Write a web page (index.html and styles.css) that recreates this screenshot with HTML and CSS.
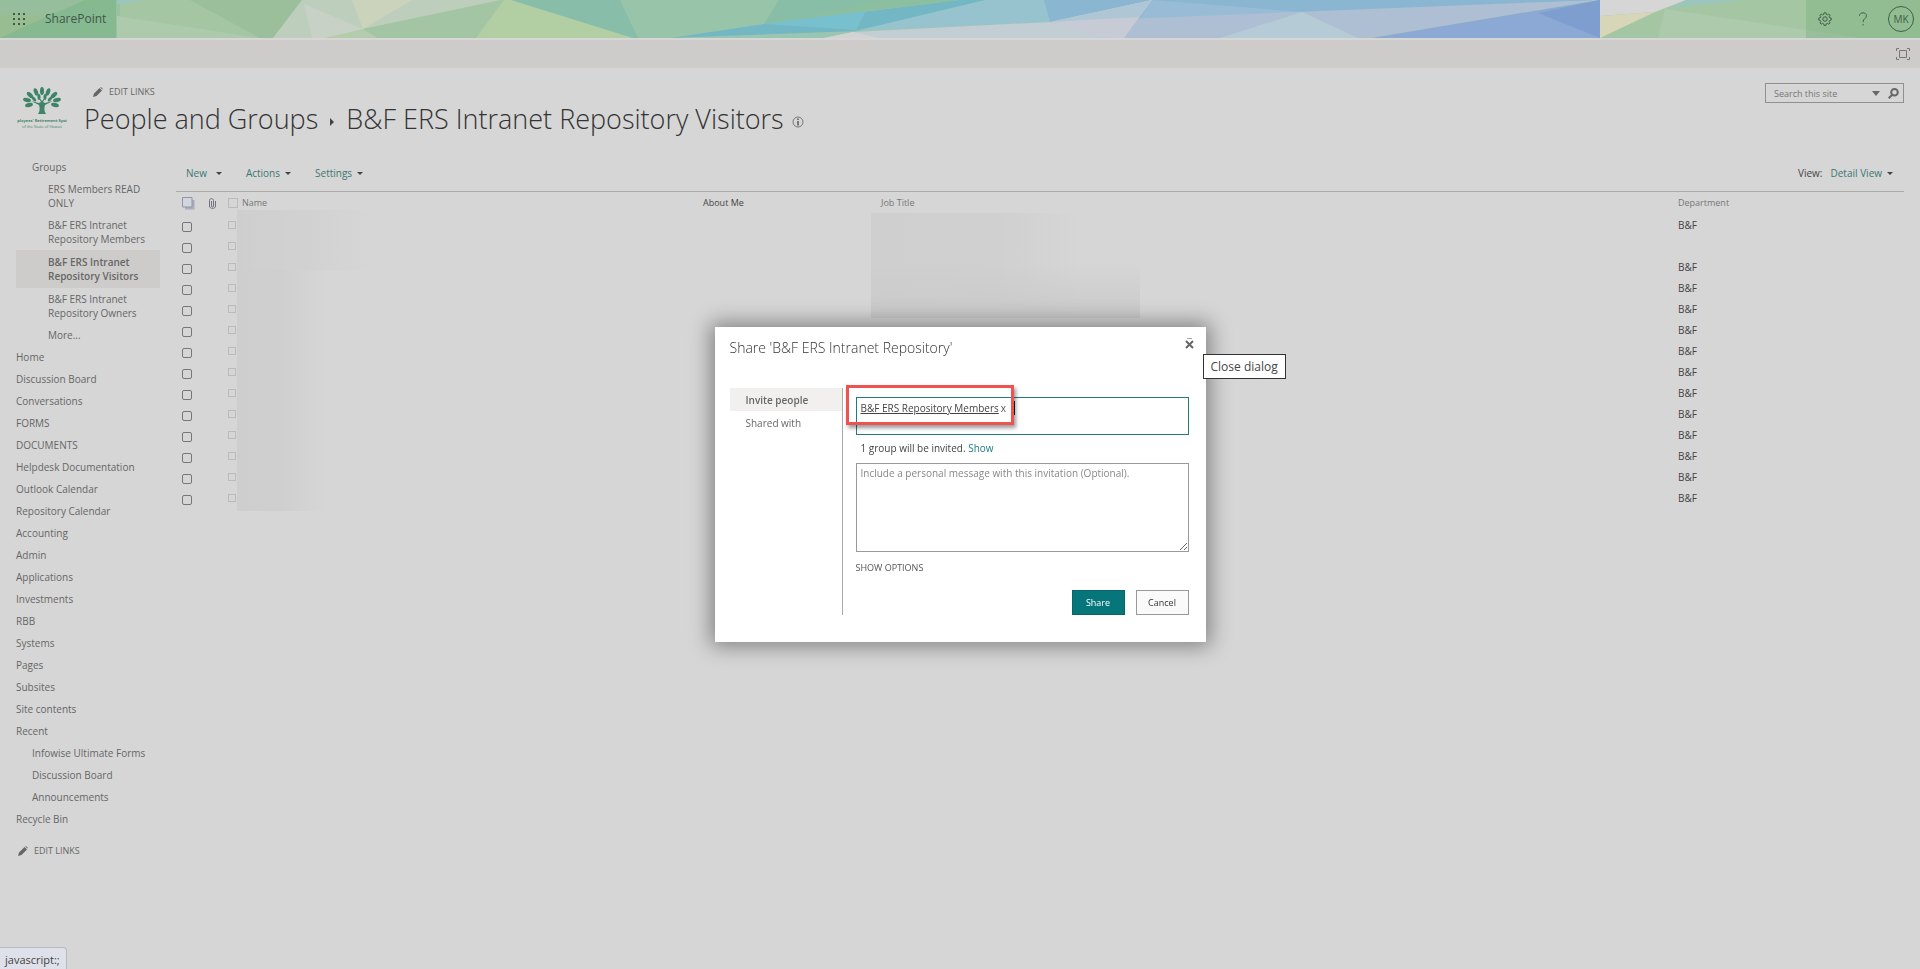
FILE: index.html
```html
<!DOCTYPE html>
<html lang="en">
<head>
    <meta charset="UTF-8">
    <meta name="viewport" content="width=device-width, initial-scale=1.0">
    <title>People and Groups</title>
    <link rel="stylesheet" href="styles.css">
</head>
<body>
    <header class="suite-bar">
        <svg class="suite-art" viewBox="0 0 1920 38" preserveAspectRatio="none" aria-hidden="true">
            <rect width="1920" height="38" fill="#a5c6a2"/>
            <polygon points="0,0 82,0 0,38" fill="#adc7a4"/>
            <polygon points="0,0 85,0 50,15 0,14" fill="#aac8b0"/>
            <polygon points="85,0 120,0 120,38 0,38" fill="#97c2a0"/>
            <polygon points="117,0 145,0 117,4" fill="#9ac5c0"/>
            <polygon points="117,16 260,38 117,38" fill="#aecaad"/>
            <polygon points="190,0 302,0 273,38 260,38" fill="#9bbe9b"/>
            <polygon points="302,0 500,0 363,29 330,38 273,38" fill="#bdcfbc"/>
            <polygon points="304,4 363,29 325,38 312,38" fill="#c8d1c5"/>
            <polygon points="352,0 412,0 363,29" fill="#ccd3bd"/>
            <polygon points="363,29 378,38 325,38" fill="#b5ccac"/>
            <polygon points="363,29 500,1 478,38 378,38" fill="#a3c5a3"/>
            <polygon points="504,0 513,0 633,38 476,38" fill="#b2cea3"/>
            <polygon points="511,0 622,0 640,38 633,38" fill="#88bda9"/>
            <polygon points="620,0 779,0 764,24 665,38 638,38" fill="#98c4a9"/>
            <polygon points="779,0 950,0 764,24" fill="#88bda7"/>
            <polygon points="800,19 880,0 960,0" fill="#8bbfa0"/>
            <polygon points="764,24 960,0 990,0 860,31 670,38" fill="#72b7c3"/>
            <polygon points="764,24 866,11 856,30" fill="#79c0cf"/>
            <polygon points="680,38 853,32 824,38" fill="#98c6b5"/>
            <polygon points="985,0 1044,0 1050,22 855,31" fill="#97c3ce"/>
            <polygon points="853,32 1050,22 1130,38 824,38" fill="#c2cdd4"/>
            <polygon points="824,38 853,32 879,38" fill="#d3d3d3"/>
            <polygon points="1044,0 1600,0 1400,12 1050,22" fill="#8ab6d2"/>
            <polygon points="1152,0 1302,12 1140,19" fill="#98bcd5"/>
            <polygon points="1050,22 1520,3 1600,0 1370,38 1120,38" fill="#aebfd3"/>
            <polygon points="1050,22 1152,0 1124,38 1105,38" fill="#c6cbd5"/>
            <polygon points="1050,22 1152,0 1140,17" fill="#afc7d4"/>
            <polygon points="1220,38 1302,12 1358,38" fill="#b5cbd5"/>
            <polygon points="1372,38 1600,0 1600,38" fill="#8ca8d4"/>
            <polygon points="1538,13 1600,0 1600,38" fill="#7f9ed0"/>
            <polygon points="1600,0 1686,0 1655,12 1600,16" fill="#d5d6d5"/>
            <polygon points="1600,16 1655,12 1600,38" fill="#d8d6b8"/>
            <polygon points="1686,0 1744,0 1670,8" fill="#9ac6bd"/>
            <polygon points="1665,9 1860,38 1658,38" fill="#aecaad"/>
        </svg>
        <div class="suite-left">
            <button class="suite-icon" aria-label="App launcher">
                <svg width="14" height="14" viewBox="0 0 14 14" fill="#3f5b45">
                    <path d="M1 1h2v2H1zM6 1h2v2H6zM11 1h2v2h-2zM1 6h2v2H1zM6 6h2v2H6zM11 6h2v2h-2zM1 11h2v2H1zM6 11h2v2H6zM11 11h2v2h-2z"/>
                </svg>
            </button>
            <a class="brand" href="#">SharePoint</a>
        </div>
        <div class="suite-right">
            <button class="suite-icon" aria-label="Settings">
                <svg width="14" height="14" viewBox="0 0 14 14" fill="none" stroke="#41604a" stroke-linejoin="round">
                    <path d="M6 .8h2l.3 1.6 1.1.5 1.4-.9 1.3 1.3-.9 1.4.5 1.1 1.5.3v2l-1.5.3-.5 1.1.9 1.4-1.3 1.3-1.4-.9-1.1.5-.3 1.5H6l-.3-1.5-1.1-.5-1.4.9-1.3-1.3.9-1.4-.5-1.1-1.5-.3v-2l1.5-.3.5-1.1-.9-1.4L3.200 2l1.400.9 1.100-.5z"/>
                    <circle cx="7" cy="7" r="2.200"/>
                </svg>
            </button>
            <button class="suite-icon" aria-label="Help">
                <svg width="10" height="14" viewBox="0 0 10 14" fill="none" stroke="#41604a">
                    <path d="M1.500 3.800C1.500-.2 8.500-.2 8.500 3.800 8.500 6.500 5 6.500 5 10.200M5 12v1.500"/>
                </svg>
            </button>
            <button class="avatar" aria-label="Account">MK</button>
        </div>
    </header>
    <div class="ribbon">
        <button class="plain-button" aria-label="Focus on content">
            <svg width="14" height="12" viewBox="0 0 14 12" fill="none" stroke="#777">
                <path d="M3.500 2.500h7v7h-7zM.5 3V.5H3M11 .5h2.500V3M13.500 9v2.500H11M3 11.500H.5V9"/>
            </svg>
        </button>
    </div>

    <div class="title-row">
        <a class="logo" href="#" aria-label="Site home">
            <svg width="52" height="44" viewBox="0 0 52 44" fill="#3d8468">
                <path d="M22 27c2-3 2-6 1-9l-8-4 8 2 2-1-4-7 5 6 5-6-4 7 2 1 8-2-8 4c-1 3-1 6 1 9z"/>
                <ellipse cx="26" cy="4" rx="2" ry="4"/>
                <ellipse cx="20" cy="5" rx="2" ry="4" transform="rotate(-20 20 5)"/>
                <ellipse cx="32" cy="5" rx="2" ry="4" transform="rotate(20 32 5)"/>
                <ellipse cx="14" cy="8" rx="2" ry="4" transform="rotate(-45 14 8)"/>
                <ellipse cx="38" cy="8" rx="2" ry="4" transform="rotate(45 38 8)"/>
                <ellipse cx="11" cy="13" rx="2" ry="4" transform="rotate(-75 11 13)"/>
                <ellipse cx="41" cy="13" rx="2" ry="4" transform="rotate(75 41 13)"/>
                <ellipse cx="13" cy="18" rx="2" ry="4" transform="rotate(-105 13 18)"/>
                <ellipse cx="39" cy="18" rx="2" ry="4" transform="rotate(105 39 18)"/>
                <ellipse cx="23" cy="10" rx="1.500" ry="3"/>
                <ellipse cx="29" cy="10" rx="1.500" ry="3"/>
                <ellipse cx="18" cy="12" rx="1.500" ry="3" transform="rotate(-40 18 12)"/>
                <ellipse cx="34" cy="12" rx="1.500" ry="3" transform="rotate(40 34 12)"/>
                <text x="26" y="35" text-anchor="middle" class="logo-text logo-text-bold">ployees' Retirement Syst</text>
                <text x="26" y="41" text-anchor="middle" class="logo-text">of the State of Hawaii</text>
            </svg>
        </a>
        <div class="title-text">
            <a class="edit-links" href="#">
                <svg width="10" height="10" viewBox="0 0 10 10" fill="#666"><path d="M0 10l1-3.500L6.500 1 9 3.500 3.500 9zM7.200.4c1-1 3.200 1 2.200 2.200z"/></svg>
                EDIT LINKS
            </a>
            <h1>
                <a href="#">People and Groups</a>
                <svg class="crumb-arrow" width="4" height="8" viewBox="0 0 4 8" fill="#444"><path d="M0 0l4 4-4 4z"/></svg>
                <span>B&amp;F ERS Intranet Repository Visitors</span>
                <svg class="info" width="12" height="12" viewBox="0 0 12 12" fill="none" stroke="#777"><circle cx="6" cy="6" r="5"/><path d="M6 2.500v1.500M6 5v4.500" stroke-width="2"/></svg>
            </h1>
        </div>
        <form class="search">
            <input type="text" placeholder="Search this site" aria-label="Search this site">
            <button type="button" class="plain-button" aria-label="Search scope">
                <svg width="8" height="5" viewBox="0 0 8 5" fill="#666"><path d="M0 0h8L4 5z"/></svg>
            </button>
            <button type="submit" class="plain-button" aria-label="Search">
                <svg width="11" height="11" viewBox="0 0 11 11" fill="none" stroke="#666" stroke-width="2"><circle cx="6.500" cy="4.300" r="3.300"/><path d="M4 7L.7 10.300"/></svg>
            </button>
        </form>
    </div>

    <div class="main">
        <nav class="side-nav">
            <a class="level-2" href="#">Groups</a>
            <a class="level-3" href="#">ERS Members READ ONLY</a>
            <a class="level-3" href="#">B&amp;F ERS Intranet Repository Members</a>
            <a class="level-3 selected" href="#">B&amp;F ERS Intranet Repository Visitors</a>
            <a class="level-3" href="#">B&amp;F ERS Intranet Repository Owners</a>
            <a class="level-3" href="#">More...</a>
            <a href="#">Home</a>
            <a href="#">Discussion Board</a>
            <a href="#">Conversations</a>
            <a href="#">FORMS</a>
            <a href="#">DOCUMENTS</a>
            <a href="#">Helpdesk Documentation</a>
            <a href="#">Outlook Calendar</a>
            <a href="#">Repository Calendar</a>
            <a href="#">Accounting</a>
            <a href="#">Admin</a>
            <a href="#">Applications</a>
            <a href="#">Investments</a>
            <a href="#">RBB</a>
            <a href="#">Systems</a>
            <a href="#">Pages</a>
            <a href="#">Subsites</a>
            <a href="#">Site contents</a>
            <a href="#">Recent</a>
            <a class="level-2" href="#">Infowise Ultimate Forms</a>
            <a class="level-2" href="#">Discussion Board</a>
            <a class="level-2" href="#">Announcements</a>
            <a href="#">Recycle Bin</a>
            <a class="edit-links" href="#">
                <svg width="10" height="10" viewBox="0 0 10 10" fill="#666"><path d="M0 10l1-3.500L6.500 1 9 3.500 3.500 9zM7.200.4c1-1 3.200 1 2.200 2.200z"/></svg>
                EDIT LINKS
            </a>
        </nav>

        <div class="content">
            <div class="toolbar">
                <button class="menu-button menu-new">New <i class="caret"></i></button>
                <button class="menu-button">Actions <i class="caret"></i></button>
                <button class="menu-button">Settings <i class="caret"></i></button>
                <span class="view-label">View:</span>
                <button class="menu-button">Detail View <i class="caret"></i></button>
            </div>
            <div class="list">
                <table>
                    <colgroup>
                        <col class="col-check">
                        <col class="col-clip">
                        <col class="col-name">
                        <col class="col-about">
                        <col>
                        <col class="col-dept">
                    </colgroup>
                    <thead>
                        <tr>
                            <th>
                                <svg width="13" height="13" viewBox="0 0 13 13"><path d="M3 3h9.500v9.500H3z" fill="#a9adbd"/><path d="M.5.5h9.500v9.500H.5z" fill="#d3d5de" stroke="#9195a6"/></svg>
                            </th>
                            <th>
                                <svg width="7" height="11" viewBox="0 0 7 11" fill="none" stroke="#70737f"><path d="M2.500 3v5c0 1.500 2 1.500 2 0V2.500c0-2.500-4-2.500-4 0V8c0 3.300 6 3.300 6 0V3"/></svg>
                            </th>
                            <th><span class="presence presence-head"></span>Name</th>
                            <th class="about">About Me</th>
                            <th>Job Title</th>
                            <th>Department</th>
                        </tr>
                    </thead>
                    <tbody>
                        <tr><td><input type="checkbox" aria-label="Select row 1"></td><td></td><td><span class="presence"></span></td><td></td><td></td><td>B&amp;F</td></tr>
                        <tr><td><input type="checkbox" aria-label="Select row 2"></td><td></td><td><span class="presence"></span></td><td></td><td></td><td></td></tr>
                        <tr><td><input type="checkbox" aria-label="Select row 3"></td><td></td><td><span class="presence"></span></td><td></td><td></td><td>B&amp;F</td></tr>
                        <tr><td><input type="checkbox" aria-label="Select row 4"></td><td></td><td><span class="presence"></span></td><td></td><td></td><td>B&amp;F</td></tr>
                        <tr><td><input type="checkbox" aria-label="Select row 5"></td><td></td><td><span class="presence"></span></td><td></td><td></td><td>B&amp;F</td></tr>
                        <tr><td><input type="checkbox" aria-label="Select row 6"></td><td></td><td><span class="presence"></span></td><td></td><td></td><td>B&amp;F</td></tr>
                        <tr><td><input type="checkbox" aria-label="Select row 7"></td><td></td><td><span class="presence"></span></td><td></td><td></td><td>B&amp;F</td></tr>
                        <tr><td><input type="checkbox" aria-label="Select row 8"></td><td></td><td><span class="presence"></span></td><td></td><td></td><td>B&amp;F</td></tr>
                        <tr><td><input type="checkbox" aria-label="Select row 9"></td><td></td><td><span class="presence"></span></td><td></td><td></td><td>B&amp;F</td></tr>
                        <tr><td><input type="checkbox" aria-label="Select row 10"></td><td></td><td><span class="presence"></span></td><td></td><td></td><td>B&amp;F</td></tr>
                        <tr><td><input type="checkbox" aria-label="Select row 11"></td><td></td><td><span class="presence"></span></td><td></td><td></td><td>B&amp;F</td></tr>
                        <tr><td><input type="checkbox" aria-label="Select row 12"></td><td></td><td><span class="presence"></span></td><td></td><td></td><td>B&amp;F</td></tr>
                        <tr><td><input type="checkbox" aria-label="Select row 13"></td><td></td><td><span class="presence"></span></td><td></td><td></td><td>B&amp;F</td></tr>
                        <tr><td><input type="checkbox" aria-label="Select row 14"></td><td></td><td><span class="presence"></span></td><td></td><td></td><td>B&amp;F</td></tr>
                    </tbody>
                </table>
                <!-- hidden names and job titles -->
                <div class="smudge smudge-names"></div>
                <div class="smudge smudge-names-top"></div>
                <div class="smudge smudge-jobs"></div>
                <div class="smudge smudge-jobs-wide"></div>
            </div>
        </div>
    </div>

    <div class="overlay">
        <div class="dialog" role="dialog" aria-labelledby="dialog-title">
            <h2 id="dialog-title">Share 'B&amp;F ERS Intranet Repository'</h2>
            <button class="close" aria-label="Close dialog">
                <svg width="9" height="11" viewBox="0 0 9 11" fill="none" stroke="#666"><path d="M2 .5h5" stroke="#aaa"/><path d="M1 3l7 7M8 3l-7 7" stroke-width="2"/></svg>
            </button>
            <div class="tooltip" role="tooltip">Close dialog</div>
            <div class="dialog-body">
                <div class="tabs">
                    <a class="active" href="#">Invite people</a>
                    <a href="#">Shared with</a>
                </div>
                <div class="share-form">
                    <div class="picker">
                        <a class="token" href="#">B&amp;F ERS Repository Members</a>
                        <a class="token-remove" href="#">x</a>
                        <i class="text-cursor"></i>
                        <input type="text" aria-label="Enter names or email addresses">
                        <div class="highlight"></div>
                    </div>
                    <p class="summary">1 group will be invited. <a href="#">Show</a></p>
                    <textarea aria-label="Message" placeholder="Include a personal message with this invitation (Optional)."></textarea>
                    <a class="show-options" href="#">SHOW OPTIONS</a>
                    <div class="buttons">
                        <button class="primary">Share</button>
                        <button>Cancel</button>
                    </div>
                </div>
            </div>
        </div>
    </div>
    <div class="status">javascript:;</div>
</body>
</html>
```
FILE: styles.css
```css
* {
    box-sizing: border-box;
}
body {
    margin: 0;
    min-height: 100vh;
    background-color: #d6d6d6;
    color: #444;
    font-family: "Open Sans", "Noto Sans", sans-serif;
    font-size: 10px;
    line-height: 14px;
}
a {
    color: inherit;
    text-decoration: none;
}
button, input, textarea {
    font-family: inherit;
    font-size: inherit;
    color: inherit;
}
.plain-button, .suite-icon {
    display: flex;
    align-items: center;
    justify-content: center;
    padding: 0;
    border: 0;
    background: none;
}

/* top bars */
.suite-bar {
    position: relative;
    display: flex;
    justify-content: space-between;
    height: 38px;
    margin-bottom: 2px;
}
.suite-art {
    position: absolute;
    width: 100%;
    height: 100%;
}
.suite-left, .suite-right {
    position: relative;
    display: flex;
    align-items: center;
    background-color: rgba(70, 150, 80, 0.2);
}
.suite-left {
    gap: 7px;
    padding-right: 10px;
}
.suite-icon {
    width: 38px;
    height: 38px;
}
.brand {
    font-size: 12px;
    font-weight: 500;
    color: #41564a;
}
.avatar {
    width: 26px;
    height: 26px;
    margin: 0 6px;
    padding: 0;
    border: 1px solid #41604a;
    border-radius: 50%;
    background: none;
    color: #41604a;
}
.ribbon {
    display: flex;
    justify-content: flex-end;
    height: 28px;
    padding: 0 10px;
    background-color: #cecccb;
}

/* site title */
.title-row {
    display: flex;
    align-items: flex-start;
    height: 88px;
    padding: 15px 16px 0;
}
.logo {
    margin: 4px 16px 0 0;
}
.logo-text {
    font-size: 4px;
}
.logo-text-bold {
    font-weight: 700;
}
.edit-links {
    display: flex;
    align-items: center;
    gap: 6px;
    color: #666;
    font-size: 9px;
}
.title-text {
    flex: 1;
}
.title-text .edit-links {
    padding: 2px 9px;
}
h1 {
    display: flex;
    align-items: center;
    margin: 0;
    font-size: 27px;
    font-weight: 300;
    line-height: 36px;
    color: #333;
}
.crumb-arrow {
    margin: 6px 12px 0;
}
.info {
    margin: 6px 0 0 8px;
}
.search {
    display: flex;
    align-items: center;
    gap: 8px;
    width: 139px;
    height: 20px;
    padding: 0 4px 0 8px;
    border: 1px solid #909090;
    color: #777;
    font-size: 9px;
}
.search input {
    flex: 1;
    min-width: 0;
    padding: 0;
    border: 0;
    background: none;
}
.search input::placeholder {
    color: #777;
}

/* left navigation */
.main {
    display: flex;
    align-items: flex-start;
    padding: 0 16px;
}
.side-nav {
    width: 144px;
    margin-right: 16px;
    color: #666;
}
.side-nav a {
    display: block;
    padding: 4px 0;
}
.side-nav .level-2 {
    padding-left: 16px;
}
.side-nav .level-3 {
    padding-left: 32px;
    padding-right: 14px;
}
.side-nav .selected {
    padding-top: 5px;
    padding-bottom: 5px;
    background-color: #cecccb;
    font-weight: 600;
}
.side-nav .edit-links {
    display: flex;
    margin-top: 10px;
    padding-left: 2px;
}

/* member list */
.content {
    flex: 1;
    min-width: 0;
}
.toolbar {
    display: flex;
    align-items: center;
    height: 36px;
    padding: 0 11px 1px 10px;
    gap: 24px;
    border-bottom: 1px solid #ababab;
}
.menu-button {
    display: flex;
    align-items: center;
    gap: 5px;
    padding: 0;
    border: 0;
    background: none;
    color: #3c7672;
}
.menu-new {
    gap: 9px;
}
.caret {
    border: 3px solid transparent;
    border-top: 3px solid #444;
    border-bottom: 0;
}
.view-label {
    margin-left: auto;
    margin-right: -16px;
}
.list {
    position: relative;
}
table {
    width: 100%;
    table-layout: fixed;
    border-collapse: collapse;
}
.col-check {
    width: 28px;
}
.col-clip {
    width: 24px;
}
.col-name {
    width: 475px;
}
.col-about {
    width: 178px;
}
.col-dept {
    width: 226px;
}
th, td {
    height: 21px;
    padding: 0;
    text-align: left;
    line-height: 14px;
    vertical-align: middle;
}
th {
    height: 22px;
    color: #777;
    font-size: 9px;
    font-weight: 400;
}
th svg {
    display: block;
}
th:first-child {
    padding-left: 6px;
}
th:nth-child(2) {
    padding-left: 5px;
}
.about {
    color: #444;
}
td:first-child {
    padding: 4px 0 0 6px;
}
td input {
    display: block;
    appearance: none;
    width: 10px;
    height: 10px;
    margin: 0;
    border: 1px solid #777;
    border-radius: 2px;
}
.presence {
    display: block;
    width: 8px;
    height: 8px;
    border: 1px solid #bbb;
}
.presence-head {
    display: inline-block;
    width: 10px;
    height: 10px;
    margin-right: 4px;
    vertical-align: -2px;
}
.smudge {
    position: absolute;
}
.smudge-names {
    top: 18px;
    left: 61px;
    width: 90px;
    height: 301px;
    background: linear-gradient(to right, #cecece, #cfcfcf 50%, #d6d6d6);
}
.smudge-names-top {
    top: 18px;
    left: 61px;
    width: 136px;
    height: 60px;
    background: linear-gradient(to right, #cfcfcf00, #d1d1d1 50%, #d6d6d6);
}
.smudge-jobs {
    top: 21px;
    left: 695px;
    width: 210px;
    height: 105px;
    background: linear-gradient(to right, #cfcfcf, #d0d0d0 60%, #d6d6d6);
}
.smudge-jobs-wide {
    top: 70px;
    left: 695px;
    width: 269px;
    height: 56px;
    background: linear-gradient(to bottom, #cfcfcf00, #cacaca);
}

/* share dialog */
.overlay {
    position: fixed;
    inset: 0;
    display: flex;
    align-items: center;
    justify-content: center;
}
.dialog {
    position: relative;
    width: 491px;
    padding: 11px 17px 27px 15px;
    background-color: #fff;
    box-shadow: 0 0 20px 4px rgba(0, 0, 0, 0.4);
}
h2 {
    margin: 0 0 30px;
    font-size: 14px;
    font-weight: 300;
    line-height: 20px;
    color: #333;
}
.close {
    position: absolute;
    top: 11px;
    right: 12px;
    display: flex;
    padding: 0;
    border: 0;
    background: none;
}
.tooltip {
    position: absolute;
    top: 27px;
    left: 488px;
    padding: 1px 7px;
    border: 1px solid #333;
    background-color: #fff;
    font-size: 12px;
    line-height: 21px;
    white-space: nowrap;
}
.dialog-body {
    display: flex;
}
.tabs {
    width: 113px;
    border-right: 1px solid #ababab;
    color: #666;
}
.tabs a {
    display: block;
    padding: 5px 16px 4px;
}
.tabs .active {
    background-color: #f1f0ef;
    font-weight: 600;
}
.share-form {
    flex: 1;
    padding: 9px 0 0 13px;
}
.picker {
    position: relative;
    display: flex;
    align-items: flex-start;
    gap: 2px;
    height: 38px;
    padding: 3px 4px;
    border: 1px solid #1f7b80;
}
.token {
    text-decoration: underline;
}
.token-remove {
    color: #555;
}
.text-cursor {
    width: 1px;
    height: 14px;
    margin-left: 6px;
    background-color: #000;
}
.picker input {
    flex: 1;
    min-width: 0;
    height: 14px;
    padding: 0;
    border: 0;
    outline: 0;
    background: none;
}
.highlight {
    position: absolute;
    top: -13px;
    left: -11px;
    width: 168px;
    height: 40px;
    border: 3px solid #ef5350;
    box-shadow: 2px 3px 4px rgba(0, 0, 0, 0.4);
}
.summary {
    margin: 6px 5px 8px;
}
.summary a {
    color: #1f7b80;
}
textarea {
    display: block;
    width: 100%;
    height: 89px;
    padding: 2px 4px;
    border: 1px solid #999;
    line-height: 14px;
}
textarea::placeholder {
    color: #888;
}
.show-options {
    display: block;
    margin: 9px 0 15px;
    color: #555;
    font-size: 9px;
}
.buttons {
    display: flex;
    justify-content: flex-end;
    gap: 11px;
}
.buttons button {
    width: 53px;
    height: 25px;
    padding: 0;
    border: 1px solid #999;
    background-color: #fafafa;
    color: #333;
    font-size: 9px;
}
.buttons .primary {
    border-color: #0a6468;
    background-color: #07767a;
    color: #fff;
}

/* browser status bubble */
.status {
    position: fixed;
    bottom: 0;
    left: 0;
    padding: 3px 6px 1px 5px;
    border: 1px solid #b5b9c0;
    border-width: 1px 1px 0 0;
    border-radius: 0 4px 0 0;
    background-color: #dfe1ea;
    font-size: 11px;
    line-height: 17px;
}
```
